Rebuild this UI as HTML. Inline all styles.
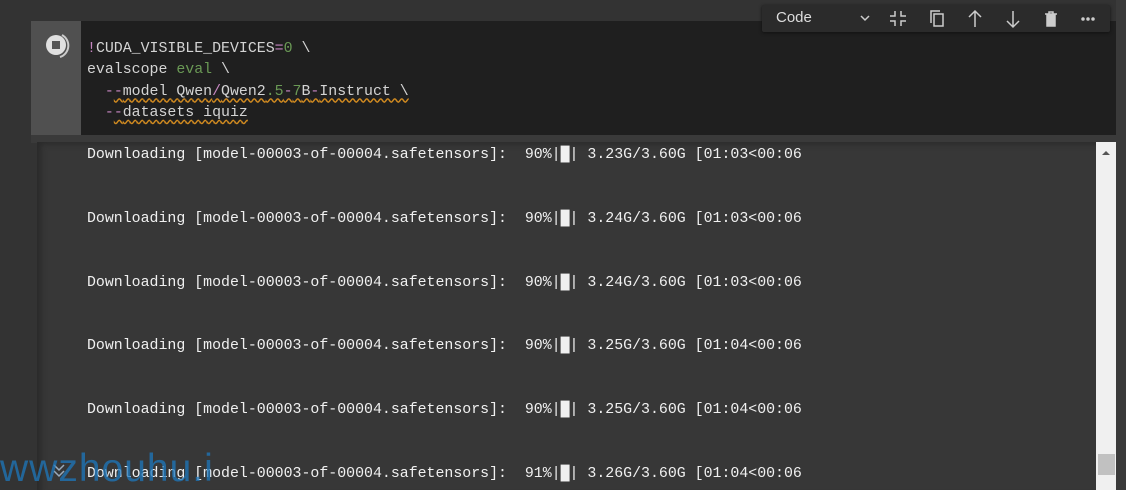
<!DOCTYPE html>
<html style="height:490px;overflow:hidden"><head><style>
body{margin:0;width:1126px;height:490px;background:#333;overflow:hidden;position:relative;font-family:"Liberation Mono",monospace;}
.cell{position:absolute;left:31px;top:21px;width:1085px;height:114px;background:#1f1f1f;}
.gut{position:absolute;left:31px;top:21px;width:50px;height:114px;background:#505050;}
.bar{position:absolute;left:31px;top:135px;width:1085px;height:8px;background:#3a3a3a;}
.out{position:absolute;left:37px;top:142px;width:1059px;height:348px;background:#373737;box-shadow:inset 6px 4px 6px -2px #2a2a2a;}
.sb{position:absolute;left:1096px;top:142px;width:20px;height:348px;background:#f0f0f0;}
.thumb{position:absolute;left:1098px;top:454px;width:17px;height:21px;background:#c1c1c1;}
.right{position:absolute;left:1116px;top:0;width:10px;height:490px;background:#3a3a3a;}
pre{margin:0;font-family:"Liberation Mono",monospace;font-size:14.9px;color:#e8e8e8;}
.code{position:absolute;left:87px;top:39px;line-height:21.3px;color:#d4d4d4;}
.o{position:absolute;left:87px;top:124px;line-height:63.8px;color:#f0f0f0;}
.p{color:#c586c0}.g{color:#6a9955}
.u{text-decoration:underline wavy #d08a20;text-underline-offset:3px}
.tb{position:absolute;left:762px;top:5px;width:348px;height:27px;background:#2b2b2b;border-radius:2px;box-shadow:0 1px 3px #111;color:#ddd;font-family:"Liberation Sans",sans-serif;font-size:15px;}
.wm{position:absolute;left:0;top:447px;font-family:"Liberation Sans",sans-serif;font-size:39px;color:rgba(30,120,190,.75);letter-spacing:1px}
</style></head><body>
<div class="right"></div>
<div class="cell"></div><div class="gut"></div>
<svg style="position:absolute;left:43px;top:31px" width="30" height="30" viewBox="0 0 30 30"><circle cx="13" cy="14" r="10" fill="#e0e0e0"/><rect x="9" y="10" width="8" height="8" fill="#555"/><path d="M19 4 A12 12 0 0 1 17 26" stroke="#ccc" stroke-width="2" fill="none"/></svg>
<pre class="code"><span class="p">!</span>CUDA_VISIBLE_DEVICES<span class="p">=</span><span class="g">0</span> \
evalscope <span class="g">eval</span> \
  <span class="p">-</span><span class="u"><span class="p">-</span>model Qwen<span class="p">/</span>Qwen2<span class="g">.5</span><span class="p">-</span><span class="g">7</span>B<span class="p">-</span>Instruct \</span>
  <span class="p">-</span><span class="u"><span class="p">-</span>datasets iquiz</span></pre>
<div class="tb"><span style="position:absolute;left:14px;top:4px">Code</span>
<svg style="position:absolute;left:96px;top:0" width="252" height="27" viewBox="0 0 252 27" fill="none" stroke="#ccc" stroke-width="1.5">
<path d="M3 11l4 4 4-4"/>
<path d="M37 6v5h-5M43 6v5h5M37 21v-5h-5M43 21v-5h5"/>
<rect x="76" y="9" width="9" height="12"/><path d="M73 18V6h9"/>
<path d="M117 22V6M111 12l6-6 6 6"/>
<path d="M155 6v16M149 16l6 6 6-6"/>
<path d="M187 9h12M191 9V7h4v2" /><rect x="189" y="10" width="8" height="11" fill="#ccc"/>
<circle cx="225" cy="14" r="1" fill="#ccc"/><circle cx="230" cy="14" r="1" fill="#ccc"/><circle cx="235" cy="14" r="1" fill="#ccc"/>
</svg></div>
<div class="bar"></div>
<div class="out"></div>
<pre class="o">Downloading [model-00003-of-00004.safetensors]:  90%|█| 3.23G/3.60G [01:03&lt;00:06
Downloading [model-00003-of-00004.safetensors]:  90%|█| 3.24G/3.60G [01:03&lt;00:06
Downloading [model-00003-of-00004.safetensors]:  90%|█| 3.24G/3.60G [01:03&lt;00:06
Downloading [model-00003-of-00004.safetensors]:  90%|█| 3.25G/3.60G [01:04&lt;00:06
Downloading [model-00003-of-00004.safetensors]:  90%|█| 3.25G/3.60G [01:04&lt;00:06
Downloading [model-00003-of-00004.safetensors]:  91%|█| 3.26G/3.60G [01:04&lt;00:06</pre>
<div class="sb"></div><div class="thumb"></div>
<svg style="position:absolute;left:1100px;top:148px" width="12" height="10"><path d="M2 7l4-4 4 4z" fill="#555"/></svg>
<svg style="position:absolute;left:52px;top:462px" width="14" height="16" fill="none" stroke="#9ab" stroke-width="1.5"><path d="M2 3l5 5 5-5M2 9l5 5 5-5"/></svg>
<div class="wm">wwzhouhu.i</div>
</body></html>
